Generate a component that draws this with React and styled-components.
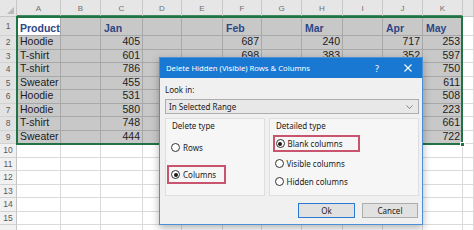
import styled, { createGlobalStyle } from "styled-components";

const GlobalStyle = createGlobalStyle`
  * { box-sizing: border-box; }
  html, body { margin: 0; padding: 0; background: #fff; }
  body { overflow: hidden; }
`;

const LETTERS = ["A", "B", "C", "D", "E", "F", "G", "H", "I", "J", "K"];

// values under the dialog (rows 4-9 of F, H, J) are left out, they never show
const DATA = [
  ["Product", "", "Jan", "", "", "Feb", "", "Mar", "", "Apr", "May"],
  ["Hoodie", "", 405, "", "", 687, "", 240, "", 717, 253],
  ["T-shirt", "", 601, "", "", 698, "", 383, "", 352, 597],
  ["T-shirt", "", 786, "", "", "", "", "", "", "", 750],
  ["Sweater", "", 455, "", "", "", "", "", "", "", 611],
  ["Hoodie", "", 531, "", "", "", "", "", "", "", 508],
  ["Hoodie", "", 580, "", "", "", "", "", "", "", 223],
  ["T-shirt", "", 748, "", "", "", "", "", "", "", 661],
  ["Sweater", "", 444, "", "", "", "", "", "", "", 722],
];

const TOTAL_ROWS = 16;

const Page = styled.div`
  position: relative;
  width: 474px;
  height: 230px;
  overflow: hidden;
  background: #fff;
`;

const Sheet = styled.div`
  display: grid;
  grid-template-columns: 17px 44px 40px 42px 39px 41px 39px 40px 41px 40px 40px 40px 11px;
  grid-template-rows: 17px 19px repeat(15, 13.5px);
  width: 474px;
  height: 230px;
  font-family: "Liberation Sans", Arial, sans-serif;
`;

const Corner = styled.div`
  grid-row: 1;
  grid-column: 1;
  display: flex;
  align-items: flex-end;
  justify-content: flex-end;
  padding: 0 2px 2px 0;
  background: #e6e6e6;
  border-right: 1px solid #c6c6c6;
  border-bottom: 1px solid #c6c6c6;
`;

const ColHead = styled.div`
  grid-row: 1;
  grid-column: ${(p) => p.$c};
  display: flex;
  align-items: flex-end;
  justify-content: center;
  padding-bottom: 2px;
  background: #e6e6e6;
  border-right: 1px solid #c9c9c9;
  border-bottom: ${(p) => (p.$sel ? "2px solid #3f8a5e" : "1px solid #c6c6c6")};
  color: #6f6f6f;
  font-size: 8px;
  line-height: 9px;
`;

const RowHead = styled.div`
  grid-row: ${(p) => p.$r};
  grid-column: 1;
  display: flex;
  align-items: center;
  justify-content: center;
  background: ${(p) => (p.$sel ? "#e2e2e2" : "#f1f1f1")};
  border-right: 1px solid #c6c6c6;
  border-bottom: 1px solid #d2d2d2;
  color: #5a5a5a;
  font-size: 8.5px;
  line-height: 10px;
`;

const Cell = styled.div`
  grid-row: ${(p) => p.$r};
  grid-column: ${(p) => p.$c};
  display: flex;
  align-items: flex-end;
  justify-content: ${(p) => (p.$num ? "flex-end" : "flex-start")};
  padding: 0 2px 1.5px 3px;
  background: ${(p) => (p.$active ? "#fff" : p.$sel ? "#c8c8c8" : "#fff")};
  border-right: 1px solid ${(p) => (p.$sel ? "#a8a8a8" : "#dadada")};
  border-bottom: 1px solid ${(p) => (p.$sel ? "#a8a8a8" : "#dadada")};
  color: ${(p) => (p.$head ? "#2d4785" : "#1c1c1c")};
  font-weight: ${(p) => (p.$head ? 700 : 400)};
  font-size: 10.5px;
  line-height: 12px;
  white-space: nowrap;
  overflow: hidden;
`;

const Selection = styled.div`
  grid-row: 2 / 11;
  grid-column: 2 / 13;
  position: relative;
  margin: -1px 0 -1px -1px;
  border: 2px solid #217346;
  pointer-events: none;
`;

const FillHandle = styled.span`
  position: absolute;
  right: -4px;
  bottom: -4px;
  width: 5px;
  height: 5px;
  background: #217346;
  border: 1px solid #fff;
`;

const Dialog = styled.div`
  position: absolute;
  left: 159px;
  top: 57px;
  width: 264px;
  height: 168px;
  display: flex;
  flex-direction: column;
  background: #f0f0f0;
  border: 1px solid #4b8fd6;
  box-shadow: 0 3px 8px rgba(0, 0, 0, 0.3);
  font-family: "Noto Sans", "Open Sans", sans-serif;
  font-size: 8px;
  color: #1a1a1a;
`;

const TitleBar = styled.div`
  height: 20px;
  display: flex;
  align-items: center;
  padding: 0 4px 0 6px;
  background: #1979d2;
  color: #fff;
`;

const Title = styled.span`
  flex: 1;
  font-size: 7.7px;
  white-space: nowrap;
`;

const TitleButton = styled.span`
  width: 20px;
  height: 20px;
  display: flex;
  align-items: center;
  justify-content: center;
  margin-left: ${(p) => p.$gap || 0}px;
  font-size: 9px;
`;

const Body = styled.div`
  flex: 1;
  display: flex;
  flex-direction: column;
  padding: 6px 3px 7px 5px;
`;

const Label = styled.div`
  height: 11px;
  line-height: 11px;
  padding-left: ${(p) => p.$inset || 0}px;
`;

const Select = styled.div`
  height: 15px;
  margin-top: 4px;
  display: flex;
  align-items: center;
  justify-content: space-between;
  padding: 0 5px 0 3px;
  background: #e8e8e8;
  border: 1px solid #adadad;
`;

const Groups = styled.div`
  display: flex;
  gap: 4px;
  height: 78px;
  margin-top: 4px;
`;

const Group = styled.div`
  flex: ${(p) => (p.$w ? `0 0 ${p.$w}px` : 1)};
  display: flex;
  flex-direction: column;
  align-items: flex-start;
  padding-top: 1px;
  background: #f6f6f6;
  border: 1px solid #dedede;
`;

const Radio = styled.div`
  display: flex;
  align-items: center;
  gap: 3px;
  height: ${(p) => p.$h || 14}px;
  width: ${(p) => (p.$w ? `${p.$w}px` : "auto")};
  margin-top: ${(p) => p.$top}px;
  margin-left: ${(p) => p.$inset}px;
  padding-left: ${(p) => p.$pad || 0}px;
  border: ${(p) => (p.$boxed ? "2px solid #c9546e" : "none")};
  white-space: nowrap;
`;

const Dot = styled.span`
  width: 9px;
  height: 9px;
  flex: 0 0 9px;
  border-radius: 50%;
  border: 1px solid #333;
  background: #fff;
  display: flex;
  align-items: center;
  justify-content: center;

  &::after {
    content: "";
    width: 4px;
    height: 4px;
    border-radius: 50%;
    background: ${(p) => (p.$on ? "#1a1a1a" : "transparent")};
  }
`;

const Buttons = styled.div`
  display: flex;
  justify-content: flex-end;
  gap: 7px;
  margin-top: 7px;
  padding-right: 1px;
`;

const Button = styled.div`
  width: ${(p) => p.$w}px;
  height: 15px;
  display: flex;
  align-items: center;
  justify-content: center;
  background: #e1e1e1;
  border: ${(p) => (p.$focus ? "1.5px solid #2a7ad5" : "1px solid #adadad")};
`;

const RadioItem = ({ on, children, ...rest }) => (
  <Radio {...rest}>
    <Dot $on={on} />
    <span>{children}</span>
  </Radio>
);

export default function App() {
  const cells = [];
  for (let r = 0; r < TOTAL_ROWS; r++) {
    const gridRow = r + 2;
    const sel = r < DATA.length;
    cells.push(
      <RowHead key={`rh${r}`} $r={gridRow} $sel={sel}>
        {r < TOTAL_ROWS - 1 ? r + 1 : ""}
      </RowHead>
    );
    for (let c = 0; c < 12; c++) {
      const v = sel && c < 11 ? DATA[r][c] : "";
      cells.push(
        <Cell
          key={`c${r}-${c}`}
          $r={gridRow}
          $c={c + 2}
          $sel={sel && c < 11}
          $active={r === 0 && c === 0}
          $head={r === 0}
          $num={typeof v === "number"}
        >
          {v}
        </Cell>
      );
    }
  }

  return (
    <Page>
      <GlobalStyle />
      <Sheet>
        <Corner>
          <svg width="7" height="7" viewBox="0 0 7 7">
            <polygon points="7,0 7,7 0,7" fill="#b9b9b9" />
          </svg>
        </Corner>
        {LETTERS.map((l, i) => (
          <ColHead key={l} $c={i + 2} $sel>
            {l}
          </ColHead>
        ))}
        <ColHead $c={13} />
        {cells}
        <Selection>
          <FillHandle />
        </Selection>
      </Sheet>

      <Dialog>
        <TitleBar>
          <Title>Delete Hidden (Visible) Rows &amp; Columns</Title>
          <TitleButton>?</TitleButton>
          <TitleButton $gap={11}>
            <svg width="8" height="8" viewBox="0 0 8 8">
              <path d="M0.5 0.5 L7.5 7.5 M7.5 0.5 L0.5 7.5" stroke="#fff" strokeWidth="1.1" />
            </svg>
          </TitleButton>
        </TitleBar>
        <Body>
          <Label>Look in:</Label>
          <Select>
            <span>In Selected Range</span>
            <svg width="7" height="4" viewBox="0 0 7 4">
              <path d="M0.5 0.5 L3.5 3.5 L6.5 0.5" fill="none" stroke="#777" strokeWidth="0.9" />
            </svg>
          </Select>
          <Groups>
            <Group $w={100}>
              <Label $inset={6}>Delete type</Label>
              <RadioItem $top={9} $inset={5}>
                Rows
              </RadioItem>
              <RadioItem on $boxed $top={11} $inset={1} $pad={2} $h={19} $w={59}>
                Columns
              </RadioItem>
            </Group>
            <Group>
              <Label $inset={6}>Detailed type</Label>
              <RadioItem on $boxed $top={4} $inset={3} $pad={0.5} $h={17} $w={87}>
                Blank columns
              </RadioItem>
              <RadioItem $top={4} $inset={4.5}>
                Visible columns
              </RadioItem>
              <RadioItem $top={4} $inset={4.5}>
                Hidden columns
              </RadioItem>
            </Group>
          </Groups>
          <Buttons>
            <Button $w={57} $focus>
              Ok
            </Button>
            <Button $w={56}>Cancel</Button>
          </Buttons>
        </Body>
      </Dialog>
    </Page>
  );
}
